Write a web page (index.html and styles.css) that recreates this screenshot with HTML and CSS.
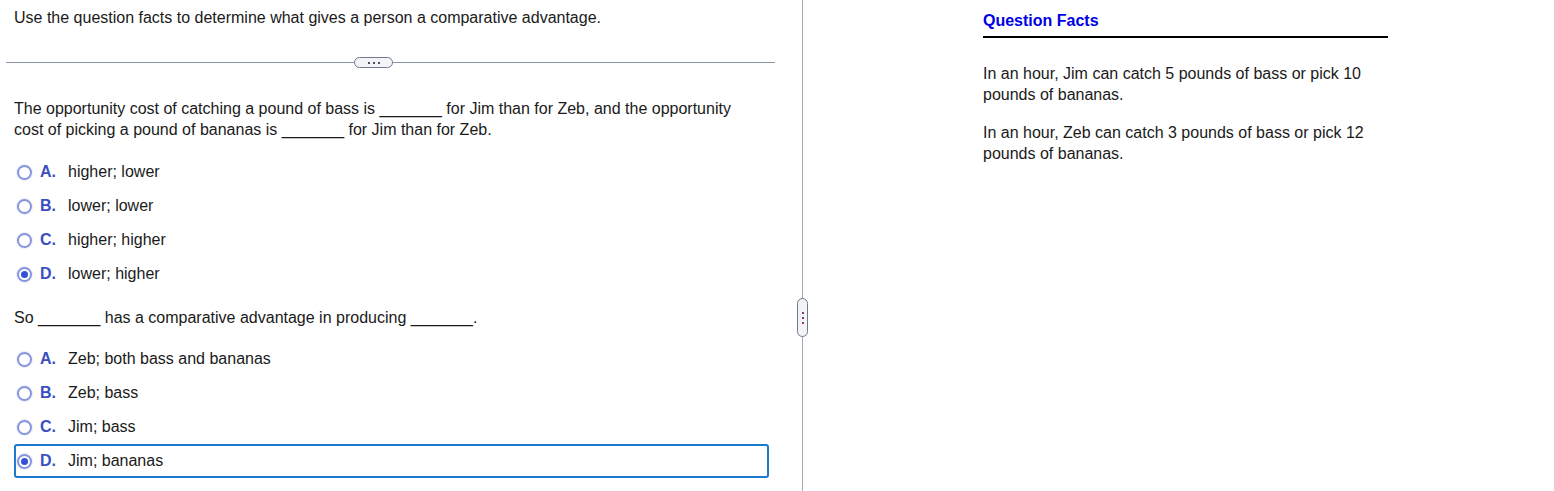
FILE: index.html
```html
<!DOCTYPE html>
<html lang="en">
<head>
    <meta charset="UTF-8">
    <title>Question</title>
    <link rel="stylesheet" href="styles.css">
</head>
<body>
    <div class="page">
        <div class="left">
            <div class="instr">Use the question facts to determine what gives a person a comparative advantage.</div>

            <div class="hsplit">
                <span class="hhandle"><i></i><i></i><i></i></span>
            </div>

            <div class="content">
                <p class="stem">The opportunity cost of catching a pound of bass is _______ for Jim than for Zeb, and the opportunity cost of picking a pound of bananas is _______ for Jim than for Zeb.</p>

                <div class="options">
                    <div class="option"><span class="radio"></span><b>A.</b><span>higher; lower</span></div>
                    <div class="option"><span class="radio"></span><b>B.</b><span>lower; lower</span></div>
                    <div class="option"><span class="radio"></span><b>C.</b><span>higher; higher</span></div>
                    <div class="option"><span class="radio on"></span><b>D.</b><span>lower; higher</span></div>
                </div>

                <p class="stem second">So _______ has a comparative advantage in producing _______.</p>

                <div class="options last">
                    <div class="option"><span class="radio"></span><b>A.</b><span>Zeb; both bass and bananas</span></div>
                    <div class="option"><span class="radio"></span><b>B.</b><span>Zeb; bass</span></div>
                    <div class="option"><span class="radio"></span><b>C.</b><span>Jim; bass</span></div>
                    <div class="option focus"><span class="radio on"></span><b>D.</b><span>Jim; bananas</span></div>
                </div>
            </div>
        </div>

        <div class="vsplit">
            <span class="vhandle"><i></i><i></i><i></i></span>
        </div>

        <div class="right">
            <h2 class="facts-title">Question Facts</h2>
            <p class="fact">In an hour, Jim can catch 5 pounds of bass or pick 10 pounds of bananas.</p>
            <p class="fact">In an hour, Zeb can catch 3 pounds of bass or pick 12 pounds of bananas.</p>
        </div>
    </div>
</body>
</html>
```

FILE: styles.css
```css
body {
    margin: 0;
    font-family: "Liberation Sans", Arial, sans-serif;
    font-size: 16px;
    color: #1a1a1a;
    background: #fff;
}
.page {
    display: flex;
    height: 491px;
    overflow: hidden;
}
.left {
    width: 802px;
    flex-shrink: 0;
}
.instr {
    padding: 9px 14px 0;
    line-height: 18px;
}
.hsplit {
    position: relative;
    height: 1px;
    background: #8a93a6;
    margin: 35px 27px 0 6px;
}
.hhandle {
    position: absolute;
    left: 348px;
    top: -5px;
    width: 37px;
    height: 9px;
    border: 1px solid #6f7a8e;
    border-radius: 6px;
    background: #f3f4f7;
    display: flex;
    align-items: center;
    justify-content: center;
    gap: 3px;
}
.hhandle i, .vhandle i {
    display: block;
    width: 2px;
    height: 2px;
    background: #4a5060;
}
.content {
    padding: 0 33px 0 14px;
}
.stem {
    margin: 35px 20px 0 0;
    line-height: 21px;
}
.stem.second {
    margin-top: 16px;
}
.options {
    margin-top: 15px;
}
.options.last {
    margin-top: 14px;
}
.option {
    display: flex;
    align-items: center;
    height: 34px;
    box-sizing: border-box;
    border: 2px solid transparent;
    border-radius: 3px;
    padding-left: 1px;
}
.option b {
    color: #3a4fc0;
    width: 28px;
    padding-left: 8px;
    flex-shrink: 0;
}
.option.focus {
    border-color: #1a7ad0;
}
.radio {
    width: 15px;
    height: 15px;
    border: 2px solid #8794dc;
    border-radius: 50%;
    box-sizing: border-box;
    box-shadow: 0 0 1px 1px #e8ebf8;
    position: relative;
    flex-shrink: 0;
}
.radio.on::after {
    content: "";
    position: absolute;
    left: 2px;
    top: 2px;
    width: 7px;
    height: 7px;
    border-radius: 50%;
    background: #3550d6;
}
.vsplit {
    position: relative;
    width: 1px;
    background: #a3a9b5;
    flex-shrink: 0;
}
.vhandle {
    position: absolute;
    left: -5px;
    top: 298px;
    width: 9px;
    height: 37px;
    border: 1px solid #6f7a8e;
    border-radius: 6px;
    background: #f3f4f7;
    display: flex;
    flex-direction: column;
    align-items: center;
    justify-content: center;
    gap: 3px;
}
.vhandle i {
    background: #8a3a6a;
}
.right {
    padding-left: 180px;
    width: 405px;
}
.facts-title {
    margin: 12px 0 0;
    font-size: 16px;
    line-height: 18px;
    color: #0000e6;
    padding-bottom: 6px;
    border-bottom: 2px solid #000;
}
.fact {
    margin: 25px 0 0;
    line-height: 21px;
}
.fact + .fact {
    margin-top: 17px;
}
```
